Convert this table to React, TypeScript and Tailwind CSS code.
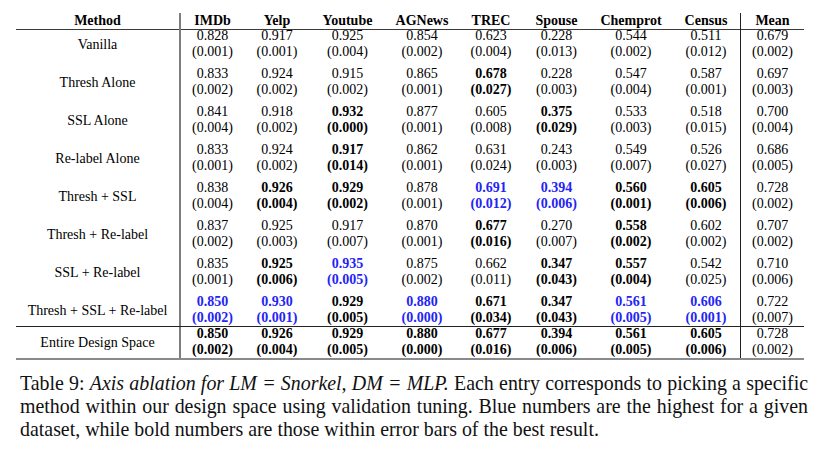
import React from "react";

type Cell = [string, string, "n" | "b" | "u"];

interface Row {
  method: string;
  cells: Cell[];
}

const headers = ["IMDb", "Yelp", "Youtube", "AGNews", "TREC", "Spouse", "Chemprot", "Census", "Mean"];

const rows: Row[] = [
  {
    method: "Vanilla",
    cells: [
      ["0.828", "0.001", "n"], ["0.917", "0.001", "n"], ["0.925", "0.004", "n"], ["0.854", "0.002", "n"],
      ["0.623", "0.004", "n"], ["0.228", "0.013", "n"], ["0.544", "0.002", "n"], ["0.511", "0.012", "n"],
      ["0.679", "0.002", "n"],
    ],
  },
  {
    method: "Thresh Alone",
    cells: [
      ["0.833", "0.002", "n"], ["0.924", "0.002", "n"], ["0.915", "0.002", "n"], ["0.865", "0.001", "n"],
      ["0.678", "0.027", "b"], ["0.228", "0.003", "n"], ["0.547", "0.004", "n"], ["0.587", "0.001", "n"],
      ["0.697", "0.003", "n"],
    ],
  },
  {
    method: "SSL Alone",
    cells: [
      ["0.841", "0.004", "n"], ["0.918", "0.002", "n"], ["0.932", "0.000", "b"], ["0.877", "0.001", "n"],
      ["0.605", "0.008", "n"], ["0.375", "0.029", "b"], ["0.533", "0.003", "n"], ["0.518", "0.015", "n"],
      ["0.700", "0.004", "n"],
    ],
  },
  {
    method: "Re-label Alone",
    cells: [
      ["0.833", "0.001", "n"], ["0.924", "0.002", "n"], ["0.917", "0.014", "b"], ["0.862", "0.001", "n"],
      ["0.631", "0.024", "n"], ["0.243", "0.003", "n"], ["0.549", "0.007", "n"], ["0.526", "0.027", "n"],
      ["0.686", "0.005", "n"],
    ],
  },
  {
    method: "Thresh + SSL",
    cells: [
      ["0.838", "0.004", "n"], ["0.926", "0.004", "b"], ["0.929", "0.002", "b"], ["0.878", "0.001", "n"],
      ["0.691", "0.012", "u"], ["0.394", "0.006", "u"], ["0.560", "0.001", "b"], ["0.605", "0.006", "b"],
      ["0.728", "0.002", "n"],
    ],
  },
  {
    method: "Thresh + Re-label",
    cells: [
      ["0.837", "0.002", "n"], ["0.925", "0.003", "n"], ["0.917", "0.007", "n"], ["0.870", "0.001", "n"],
      ["0.677", "0.016", "b"], ["0.270", "0.007", "n"], ["0.558", "0.002", "b"], ["0.602", "0.002", "n"],
      ["0.707", "0.002", "n"],
    ],
  },
  {
    method: "SSL + Re-label",
    cells: [
      ["0.835", "0.001", "n"], ["0.925", "0.006", "b"], ["0.935", "0.005", "u"], ["0.875", "0.002", "n"],
      ["0.662", "0.011", "n"], ["0.347", "0.043", "b"], ["0.557", "0.004", "b"], ["0.542", "0.025", "n"],
      ["0.710", "0.006", "n"],
    ],
  },
  {
    method: "Thresh + SSL + Re-label",
    cells: [
      ["0.850", "0.002", "u"], ["0.930", "0.001", "u"], ["0.929", "0.005", "b"], ["0.880", "0.000", "u"],
      ["0.671", "0.034", "b"], ["0.347", "0.043", "b"], ["0.561", "0.005", "u"], ["0.606", "0.001", "u"],
      ["0.722", "0.007", "n"],
    ],
  },
];

const total: Row = {
  method: "Entire Design Space",
  cells: [
    ["0.850", "0.002", "b"], ["0.926", "0.004", "b"], ["0.929", "0.005", "b"], ["0.880", "0.000", "b"],
    ["0.677", "0.016", "b"], ["0.394", "0.006", "b"], ["0.561", "0.005", "b"], ["0.605", "0.006", "b"],
    ["0.728", "0.002", "n"],
  ],
};

const gridCols = "grid grid-cols-[165px_63px_66px_75px_74px_64px_67px_82px_69px_63px]";

// vertical rules sit on the Method cell and the Census cell
const cellBorder = (i: number) =>
  i === 7 ? "border-r border-[#222]" : "";

const styleFor = (s: Cell[2]) =>
  s === "u" ? "font-bold text-[#2323f5]" : s === "b" ? "font-bold text-black" : "text-black";

const TableRow = ({ row, pad }: { row: Row; pad: string }) => (
  <div className={gridCols}>
    <div className={`flex items-start border-r-2 border-[#7d7d7d] ${pad}`}>
      <div className="h-[32px] w-full flex items-center justify-center">{row.method}</div>
    </div>
    {row.cells.map(([v, e, s], i) => (
      <div key={i} className={`text-center ${cellBorder(i)} ${pad}`}>
        <div className={`leading-[16px] ${styleFor(s)}`}>{v}</div>
        <div className={`leading-[16px] ${styleFor(s)}`}>({e})</div>
      </div>
    ))}
  </div>
);

export default function App() {
  return (
    <div className="w-[822px] h-[449px] bg-white overflow-hidden pt-[13px] text-black font-['Liberation_Serif','Times_New_Roman',serif]">
      <div className="ml-[16px] w-[788px] text-[14px]">
        {/* header */}
        <div className={`${gridCols} font-bold h-[16px] leading-[16px]`}>
          <div className="text-center border-r-2 border-[#7d7d7d]">Method</div>
          {headers.map((h, i) => (
            <div key={h} className={`text-center ${cellBorder(i)}`}>{h}</div>
          ))}
        </div>
        <div className="h-px bg-[#3a3a3a]" />

        {/* body */}
        <div className="-mt-[2px]">
          {rows.map((r, idx) => (
            <TableRow key={r.method} row={r} pad={idx === rows.length - 1 ? "pb-[1px]" : "pb-[6px]"} />
          ))}
        </div>
        <div className="h-px bg-[#222] -mt-[1px] relative" />
        <div className="-mt-[1px]">
          <TableRow row={total} pad="pb-0" />
        </div>
        <div className="h-[2px] bg-[#8a8a8a]" />
      </div>

      {/* caption */}
      <div className="mt-[12px] ml-[20px] w-[788px] text-[19.9px] leading-[23px] text-[#111]">
        <div className="text-justify [text-align-last:justify] whitespace-nowrap">
          Table 9: <i>Axis ablation for LM = Snorkel, DM = MLP.</i> Each entry corresponds to picking a specific
        </div>
        <div className="text-justify [text-align-last:justify] whitespace-nowrap">
          method within our design space using validation tuning. Blue numbers are the highest for a given
        </div>
        <div className="whitespace-nowrap">
          dataset, while bold numbers are those within error bars of the best result.
        </div>
      </div>
    </div>
  );
}
